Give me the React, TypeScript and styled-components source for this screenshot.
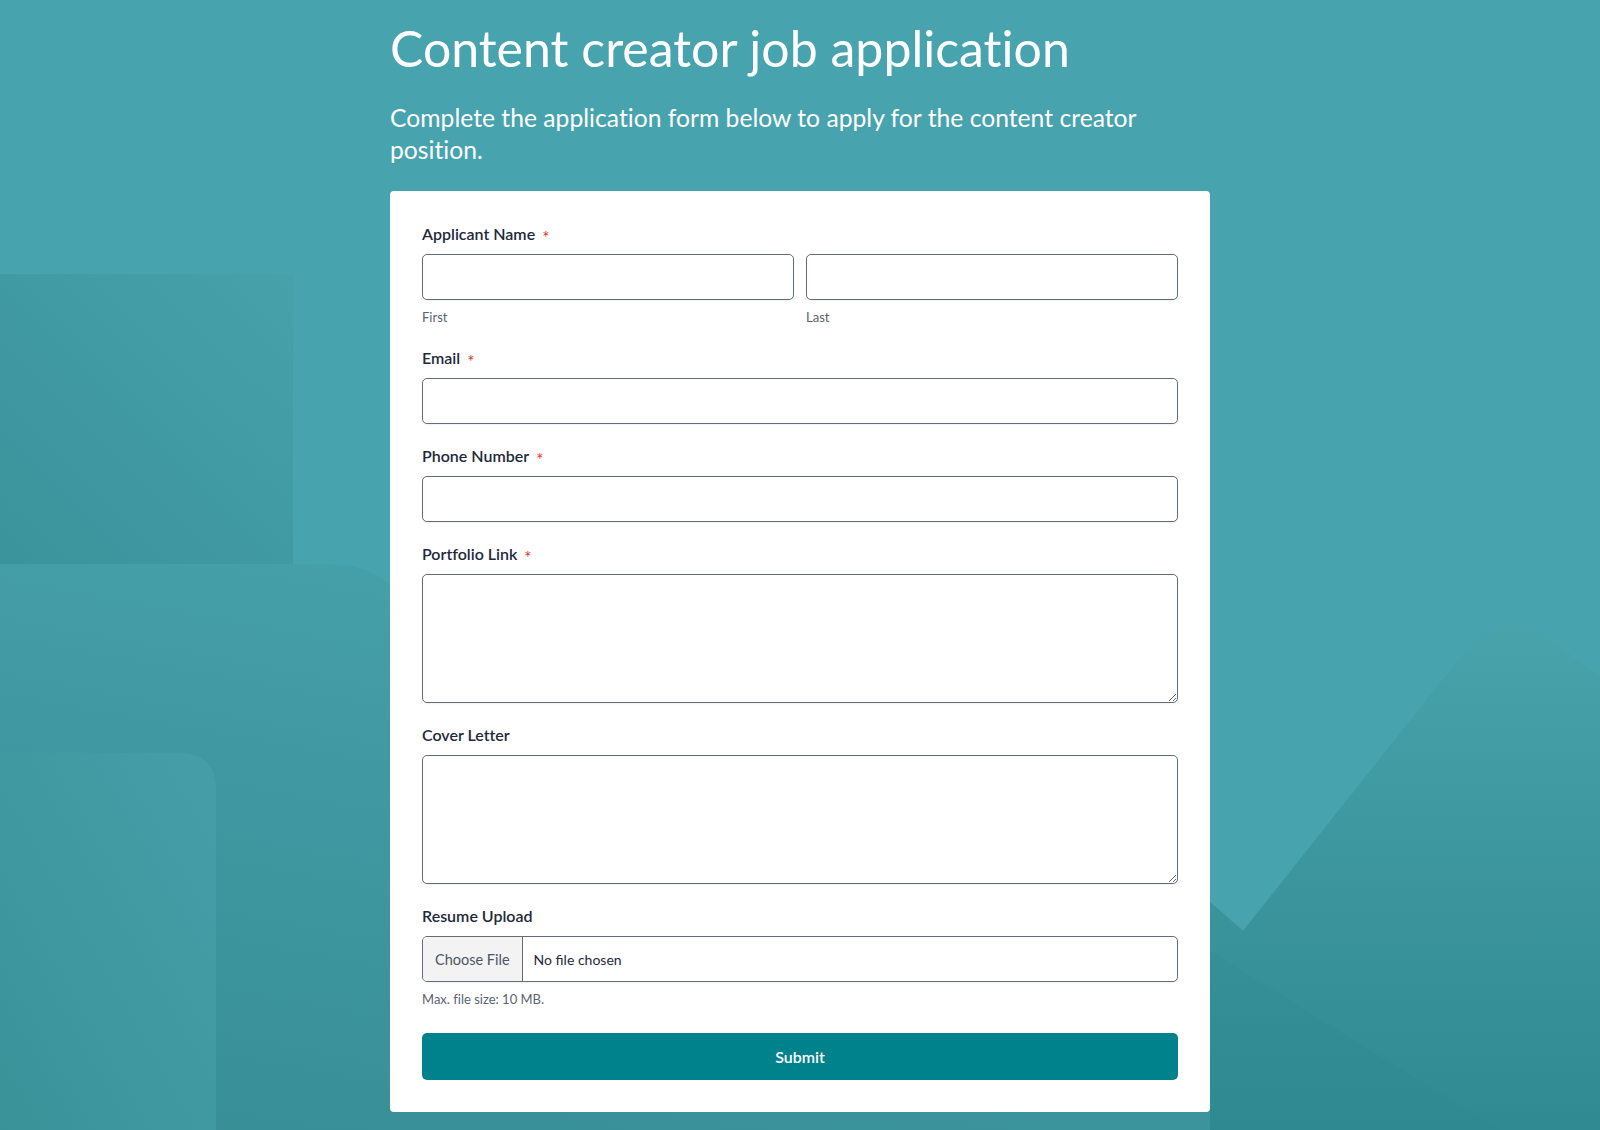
import styled, { createGlobalStyle } from "styled-components";

const GlobalStyle = createGlobalStyle`
  html, body {
    margin: 0;
    padding: 0;
  }
  body {
    font-family: "Lato", "Noto Sans", sans-serif;
    font-variant-ligatures: none;
    color: #1e293b;
    background: #47a3ae;
  }
  * {
    box-sizing: border-box;
  }
`;

const Page = styled.div`
  position: relative;
  min-height: 1130px;
  overflow: hidden;
`;

const Backdrop = styled.svg`
  position: absolute;
  top: 0;
  left: 0;
  width: 100%;
  height: 100%;
  z-index: 0;
`;

const Container = styled.main`
  position: relative;
  z-index: 1;
  width: 820px;
  margin: 0 auto;
  padding: 18px 0 19px;
`;

const Title = styled.h1`
  margin: 0;
  font-size: 50px;
  line-height: 60px;
  font-weight: 400;
  color: #ffffff;
  font-variant-ligatures: none;
`;

const Subtitle = styled.p`
  margin: 24px 0 25px;
  font-size: 24.7px;
  line-height: 32px;
  font-weight: 400;
  color: #ffffff;
  font-variant-ligatures: none;
`;

const Card = styled.form`
  background: #ffffff;
  border-radius: 4px;
  padding: 31px 32px 32px;
  display: flex;
  flex-direction: column;
  gap: 20px;
`;

const Field = styled.div`
  display: flex;
  flex-direction: column;
`;

const Label = styled.label`
  display: flex;
  align-items: center;
  gap: 7px;
  font-size: 16px;
  line-height: 24px;
  font-weight: 600;
  color: #1e293b;
  margin-bottom: 8px;
`;

const Required = styled.span`
  color: #dc3a26;
  font-size: 17px;
  font-weight: 400;
  line-height: 1;
  transform: translateY(3px);
`;

const NameRow = styled.div`
  display: grid;
  grid-template-columns: 1fr 1fr;
  gap: 12px;
`;

const NamePart = styled.div`
  display: flex;
  flex-direction: column;
`;

const TextInput = styled.input`
  width: 100%;
  height: 46px;
  border: 1px solid #646b7a;
  border-radius: 5px;
  background: #ffffff;
  box-shadow: 0 1px 2px rgba(15, 23, 42, 0.06);
  padding: 0 12px;
  font-family: "Lato", sans-serif;
  font-size: 15px;
  color: #1e293b;
  outline: none;
`;

const TextArea = styled.textarea`
  width: 100%;
  height: 129px;
  border: 1px solid #646b7a;
  border-radius: 5px;
  background: #ffffff;
  box-shadow: 0 1px 2px rgba(15, 23, 42, 0.06);
  padding: 10px 12px;
  font-family: "Lato", sans-serif;
  font-size: 15px;
  color: #1e293b;
  outline: none;
  display: block;
`;

const SubLabel = styled.span`
  margin-top: 8px;
  font-size: 13px;
  line-height: 18px;
  color: #5b6270;
`;

const FileInput = styled.input`
  width: 100%;
  height: 46px;
  border: 1px solid #646b7a;
  border-radius: 5px;
  background: #ffffff;
  box-shadow: 0 1px 2px rgba(15, 23, 42, 0.06);
  padding: 0;
  font-family: "Lato", sans-serif;
  font-size: 14px;
  color: #1e293b;
  overflow: hidden;

  &::file-selector-button {
    height: 100%;
    margin: 0 11px 0 0;
    padding: 0 12px;
    border: none;
    border-right: 1px solid #646b7a;
    background: #f3f3f4;
    font-family: "Lato", sans-serif;
    font-size: 14.5px;
    color: #4a5565;
  }
`;

const Hint = styled.span`
  margin-top: 8px;
  font-size: 13px;
  line-height: 18px;
  color: #5b6270;
`;

const SubmitButton = styled.button`
  margin-top: 5px;
  height: 47px;
  width: 100%;
  border: none;
  border-radius: 5px;
  background: #00828c;
  color: #ffffff;
  font-family: "Lato", sans-serif;
  font-size: 16px;
  font-weight: 600;
  cursor: pointer;
`;

function Background() {
  return (
    <Backdrop viewBox="0 0 1600 1130" preserveAspectRatio="none" aria-hidden>
      <defs>
        <linearGradient id="rectA" x1="1" y1="0" x2="0" y2="1">
          <stop offset="0" stopColor="#46a1ab" />
          <stop offset="1" stopColor="#3b939b" />
        </linearGradient>
        <linearGradient id="shapeB" x1="0.4" y1="0" x2="0" y2="1">
          <stop offset="0" stopColor="#46a0aa" />
          <stop offset="0.5" stopColor="#3e969f" />
          <stop offset="1" stopColor="#378e95" />
        </linearGradient>
        <linearGradient id="shapeC" x1="1" y1="0" x2="0" y2="1">
          <stop offset="0" stopColor="#469fa8" />
          <stop offset="1" stopColor="#3a9299" />
        </linearGradient>
        <linearGradient id="mountain" x1="0" y1="0" x2="0" y2="1">
          <stop offset="0" stopColor="#48a3ab" />
          <stop offset="0.55" stopColor="#3b949c" />
          <stop offset="1" stopColor="#2f8a91" />
        </linearGradient>
      </defs>
      <rect x="0" y="0" width="1600" height="1130" fill="#47a3ae" />
      <rect x="0" y="274" width="293" height="290" fill="url(#rectA)" />
      <path
        d="M0 564 H330 Q400 564 410 630 V1100 H1243 V1130 H0 Z"
        fill="url(#shapeB)"
      />
      <path d="M0 752 H178 Q216 752 216 790 V1130 H0 Z" fill="url(#shapeC)" />
      <path
        d="M1210 901 L1243 930 L1463 653 Q1505 600 1550 640 L1600 675 V1130 H1210 Z"
        fill="url(#mountain)"
      />
      <path
        d="M1210 950 L1500 1130 H1210 Z"
        fill="#2c8188"
        fillOpacity="0.12"
      />
    </Backdrop>
  );
}

export default function App() {
  return (
    <Page>
      <GlobalStyle />
      <Background />
      <Container>
        <Title>Content creator job application</Title>
        <Subtitle>
          Complete the application form below to apply for the content creator
          position.
        </Subtitle>
        <Card onSubmit={(e) => e.preventDefault()}>
          <Field>
            <Label>
              Applicant Name <Required>*</Required>
            </Label>
            <NameRow>
              <NamePart>
                <TextInput type="text" />
                <SubLabel>First</SubLabel>
              </NamePart>
              <NamePart>
                <TextInput type="text" />
                <SubLabel>Last</SubLabel>
              </NamePart>
            </NameRow>
          </Field>
          <Field>
            <Label>
              Email <Required>*</Required>
            </Label>
            <TextInput type="email" />
          </Field>
          <Field>
            <Label>
              Phone Number <Required>*</Required>
            </Label>
            <TextInput type="tel" />
          </Field>
          <Field>
            <Label>
              Portfolio Link <Required>*</Required>
            </Label>
            <TextArea />
          </Field>
          <Field>
            <Label>Cover Letter</Label>
            <TextArea />
          </Field>
          <Field>
            <Label>Resume Upload</Label>
            <FileInput type="file" />
            <Hint>Max. file size: 10 MB.</Hint>
          </Field>
          <SubmitButton type="submit">Submit</SubmitButton>
        </Card>
      </Container>
    </Page>
  );
}
